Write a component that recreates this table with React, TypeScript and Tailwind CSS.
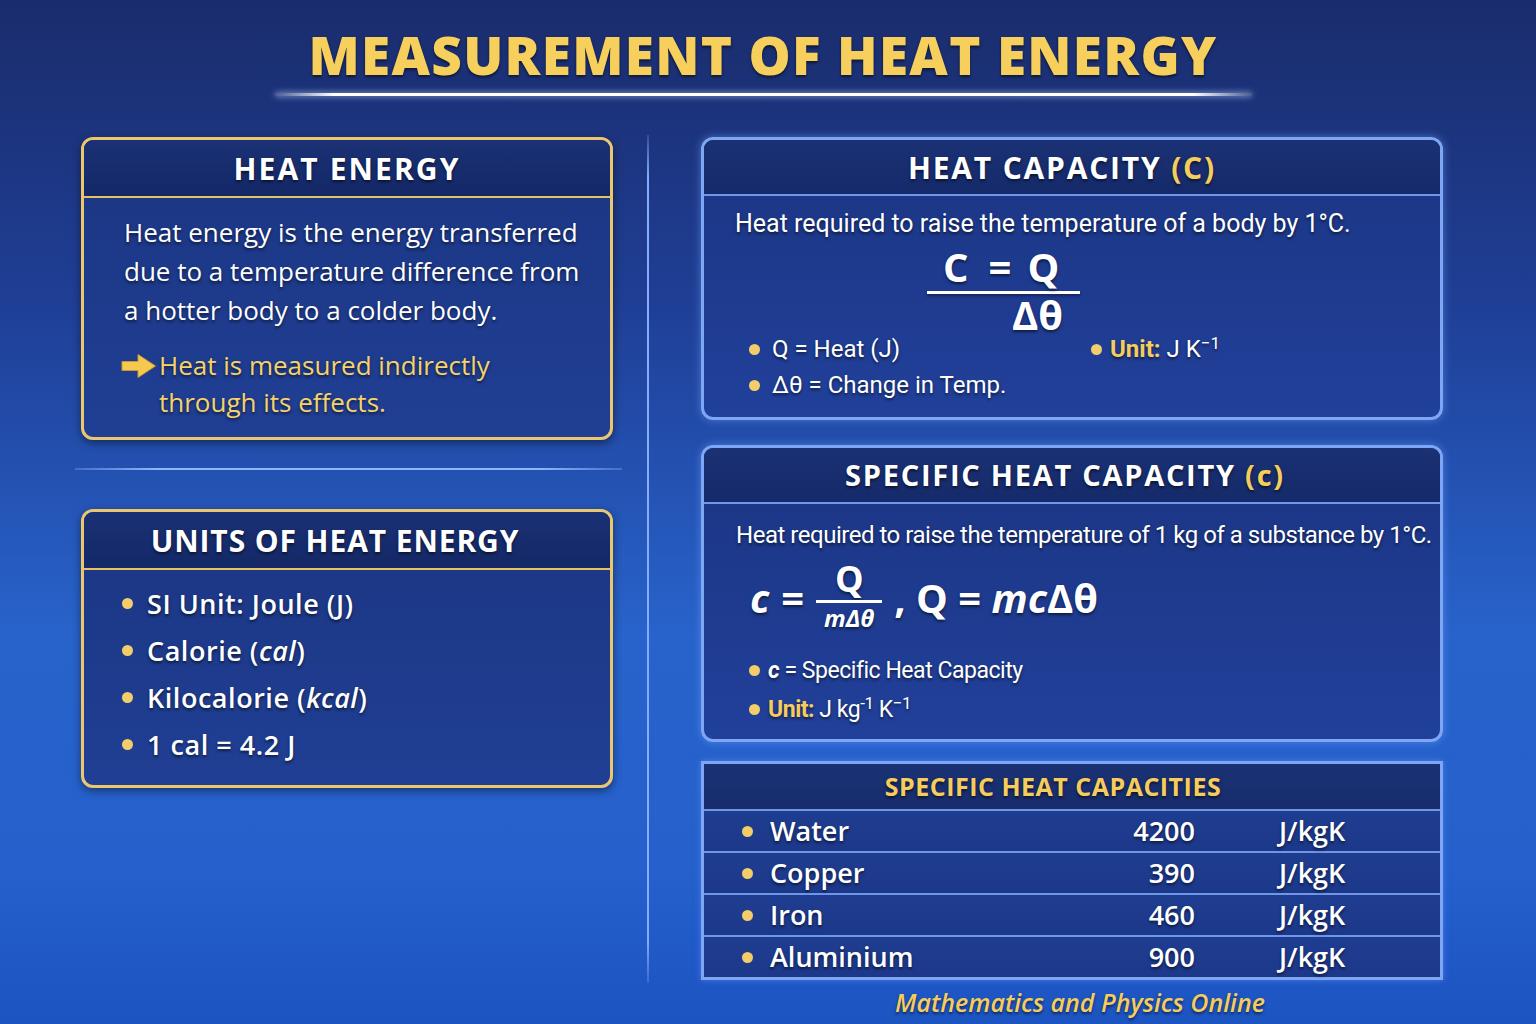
const shadow = "[text-shadow:0_2px_3px_rgba(0,0,0,0.55)]";
const cond = "font-['Roboto',sans-serif]";

const Dot = ({ className = "" }: { className?: string }) => (
  <span className={"inline-block w-[11px] h-[11px] rounded-full bg-[#f3cd6a] shrink-0 " + className} />
);

const Arrow = () => (
  <svg width="36" height="26" viewBox="0 0 36 26" className="shrink-0">
    <path d="M1 8.5 H17 V1.5 L34.5 13 L17 24.5 V17.5 H1 Z" fill="#f5c84f" stroke="#c99a2a" strokeWidth="1" />
  </svg>
);

const GoldCard = ({ title, className, titleClass = "", children }: { title: string; className: string; titleClass?: string; children: React.ReactNode }) => (
  <section className={"rounded-[12px] border-[3px] border-[#eac76e] bg-[linear-gradient(180deg,#1b3582,#203f94)] shadow-[0_3px_8px_rgba(0,0,0,0.45)] overflow-hidden flex flex-col " + className}>
    <div className="h-[58px] shrink-0 flex items-center justify-center bg-[linear-gradient(180deg,#1a3174,#142867)] border-b-2 border-[#e6c264]">
      <h2 className={"text-[30px] font-bold text-white " + shadow + " " + titleClass}>{title}</h2>
    </div>
    {children}
  </section>
);

const BlueCard = ({ title, sym, className, titleClass = "", children }: { title: string; sym: string; className: string; titleClass?: string; children: React.ReactNode }) => (
  <section className={"rounded-[12px] border-[3px] border-[#7ea6f2] bg-[linear-gradient(180deg,#1b3583,#21409a)] shadow-[0_0_8px_rgba(110,160,255,0.55)] overflow-hidden flex flex-col " + className}>
    <div className="h-[56px] shrink-0 flex items-center justify-center pr-[14px] bg-[linear-gradient(180deg,#1a3174,#152a6a)] border-b-2 border-[#6f97e6]">
      <h2 className={"font-bold tracking-[0.06em] text-white " + shadow + " " + titleClass}>
        {title} <span className="text-[#f6cd5c]">({sym})</span>
      </h2>
    </div>
    {children}
  </section>
);

const rows = [
  { name: "Water", value: "4200" },
  { name: "Copper", value: "390" },
  { name: "Iron", value: "460" },
  { name: "Aluminium", value: "900" },
];

export default function App() {
  return (
    <div className="w-[1536px] h-[1024px] overflow-hidden bg-[linear-gradient(180deg,#1a2c6c_0%,#1f3f96_30%,#2863cb_62%,#2560cc_85%,#1c54c2_100%)] font-['Open_Sans',sans-serif] text-white">
      <header className="flex flex-col items-center pt-[24px] pr-[10px]">
        <h1 className={"text-[53px] leading-[62px] font-extrabold tracking-[0.025em] text-[#f7cf5c] " + shadow}>
          MEASUREMENT OF HEAT ENERGY
        </h1>
        <div className="mt-[7px] h-[3px] w-[977px] rounded-full bg-[linear-gradient(90deg,rgba(255,255,255,0.2),#ffffff_6%,#ffffff_94%,rgba(255,255,255,0.2))] shadow-[0_0_6px_rgba(190,215,255,0.9)]" />
      </header>

      <main className="flex pl-[81px] mt-[41px]">
        <div className="w-[532px] flex flex-col">
          <GoldCard title="HEAT ENERGY" className="h-[303px]" titleClass="tracking-[0.07em]">
            <div className="pl-[40px] pr-[6px] pt-[15px]">
              <p className={"text-[26px] leading-[39px] font-medium " + shadow}>
                Heat energy is the energy transferred<br />due to a temperature difference from<br />a hotter body to a colder body.
              </p>
              <div className="mt-[17px] flex items-start gap-[2px] ml-[-3px]">
                <div className="pt-[6px]"><Arrow /></div>
                <p className={"text-[26px] leading-[37px] font-medium text-[#f6d36a] " + shadow}>
                  Heat is measured indirectly<br />through its effects.
                </p>
              </div>
            </div>
          </GoldCard>

          <div className="mt-[28px] ml-[-6px] w-[547px] h-[2px] bg-[linear-gradient(90deg,rgba(140,180,255,0.3),#8fb6ff_15%,#8fb6ff_85%,rgba(140,180,255,0.3))]" />

          <GoldCard title="UNITS OF HEAT ENERGY" className="mt-[39px] h-[279px]" titleClass="tracking-[0.03em] mr-[24px]">
            <ul className={"pl-[38px] pt-[10px] text-[27px] leading-[47px] font-semibold tracking-[0.02em] " + shadow}>
              <li className="flex items-center gap-[14px]"><Dot />SI Unit: Joule (J)</li>
              <li className="flex items-center gap-[14px]"><Dot /><span>Calorie (<i>cal</i>)</span></li>
              <li className="flex items-center gap-[14px]"><Dot /><span>Kilocalorie (<i>kcal</i>)</span></li>
              <li className="flex items-center gap-[14px]"><Dot />1 cal = 4.2 J</li>
            </ul>
          </GoldCard>
        </div>

        <div className="ml-[34px] mt-[-2px] w-[2px] h-[848px] bg-[linear-gradient(180deg,rgba(140,180,255,0.2),#86acff_5%,#86acff_95%,rgba(140,180,255,0.2))]" />

        <div className="ml-[52px] w-[742px] flex flex-col">
          <BlueCard title="HEAT CAPACITY" sym="C" className="h-[283px]" titleClass="text-[30px] pr-[6px]">
            <div className={"pl-[31px] pt-[13px] " + cond + " " + shadow}>
              <p className="text-[25px] leading-[30px]">Heat required to raise the temperature of a body by 1°C.</p>
              <div className="ml-[192px] mt-[9px] w-[153px] font-['Open_Sans',sans-serif] font-bold">
                <div className="flex pl-[16px] text-[40px] leading-[38px]">
                  <span>C</span>
                  <span className="ml-[20px]">=</span>
                  <span className="ml-[16px]">Q</span>
                </div>
                <div className="mt-[5px] h-[3px] bg-white shadow-[0_2px_3px_rgba(0,0,0,0.4)]" />
                <div className="pr-[17px] text-right text-[40px] leading-[42px]">Δθ</div>
              </div>
              <div className="grid grid-cols-[342px_1fr] ml-[14px] mt-[-5px] text-[24px] leading-[36px]">
                <div className="flex items-center gap-[12px]"><Dot />Q = Heat (J)</div>
                <div className="flex items-center gap-[8px]"><Dot /><span><b className="text-[#f6cd5c]">Unit:</b> J K<sup className="text-[17px]">−1</sup></span></div>
                <div className="flex items-center gap-[12px]"><Dot />Δθ = Change in Temp.</div>
              </div>
            </div>
          </BlueCard>

          <BlueCard title="SPECIFIC HEAT CAPACITY" sym="c" className="mt-[25px] h-[297px]" titleClass="text-[29px]">
            <div className={"pl-[32px] pt-[16px] " + cond + " " + shadow}>
              <p className="text-[24px] leading-[30px] tracking-[-0.02em]">Heat required to raise the temperature of 1 kg of a substance by 1°C.</p>
              <div className="ml-[14px] mt-[12px] flex items-center font-['Open_Sans',sans-serif] font-bold text-[40px] leading-[44px]">
                <i>c</i>
                <span className="ml-[12px]">=</span>
                <span className="ml-[12px] inline-flex flex-col items-center w-[66px]">
                  <span className="text-[36px] leading-[34px]">Q</span>
                  <span className="mt-[4px] w-full h-[3px] bg-white" />
                  <i className="text-[24px] leading-[30px]">mΔθ</i>
                </span>
                <span className="ml-[12px]">, Q = <i>mc</i>Δθ</span>
              </div>
              <div className="ml-[13px] mt-[18px] text-[23px] leading-[39px] tracking-[-0.02em]">
                <div className="flex items-center gap-[8px]"><Dot /><span><b><i>c</i></b> = Specific Heat Capacity</span></div>
                <div className="flex items-center gap-[8px]"><Dot /><span><b className="text-[#f6cd5c]">Unit:</b> J kg<sup className="text-[17px]">-1</sup> K<sup className="text-[17px]">−1</sup></span></div>
              </div>
            </div>
          </BlueCard>

          <section className="mt-[19px] h-[219px] border-[3px] border-[#7ea6f2] bg-[#1d3a8b] shadow-[0_0_6px_rgba(110,160,255,0.5)] flex flex-col">
            <div className="h-[47px] shrink-0 flex items-center justify-center pr-[38px] bg-[linear-gradient(180deg,#1a3174,#172d6c)] border-b-2 border-[#6f97e6]">
              <h3 className={"text-[25px] font-bold tracking-[0.02em] text-[#f6cd5c] " + shadow}>SPECIFIC HEAT CAPACITIES</h3>
            </div>
            {rows.map((r, i) => (
              <div
                key={r.name}
                className={
                  "flex-1 min-h-0 flex items-center pl-[38px] text-[27px] leading-[36px] font-semibold bg-[linear-gradient(180deg,#1f3d90,#1c388a)] " +
                  shadow +
                  (i < rows.length - 1 ? " border-b-2 border-[#6f97e6]" : "")
                }
              >
                <Dot />
                <span className="ml-[17px] w-[327px]">{r.name}</span>
                <span className="w-[98px] text-right">{r.value}</span>
                <span className="ml-[84px]">J/kgK</span>
              </div>
            ))}
          </section>

          <p className={"mt-[6px] pl-[16px] text-center text-[25px] leading-[32px] italic font-semibold text-[#f6cd5c] " + shadow}>
            Mathematics and Physics Online
          </p>
        </div>
      </main>
    </div>
  );
}
